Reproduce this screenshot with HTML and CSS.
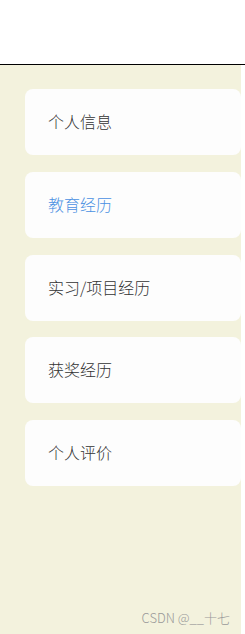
FILE: index.html
```html
<!DOCTYPE html>
<html lang="zh-CN">
<head>
  <meta charset="UTF-8">
  <title>简历</title>
  <link rel="stylesheet" href="styles.css">
</head>
<body>
  <div class="topo"></div>

  <div class="menu">
    <div class="item">个人信息</div>
    <div class="item ativo">教育经历</div>
    <div class="item">实习/项目经历</div>
    <div class="item">获奖经历</div>
    <div class="item">个人评价</div>

    <span class="marca">CSDN @__十七</span>
  </div>
</body>
</html>
```

FILE: styles.css
```css
* {
  box-sizing: border-box;
}

body {
  margin: 0;
  padding: 0;
  background-color: #fff;
  font-family: "Noto Sans CJK SC", "Liberation Sans", sans-serif;
  height: 634px;
  display: flex;
  flex-direction: column;
}

.topo {
  height: 65px;
  border-bottom: 1px solid #000;
}

.menu {
  position: relative;
  flex: 1;
  width: 241px;
  background-color: #f3f2dd;
  padding: 24px 0 0 25px;
  display: flex;
  flex-direction: column;
  gap: 16.75px;
}

.item {
  height: 66px;
  background-color: #fdfdfd;
  border-radius: 8px;
  padding: 0 0 2px 23px;
  display: flex;
  align-items: center;
  font-size: 16px;
  font-weight: 300;
  color: #333;
}

.ativo {
  color: #4a90e2;
}

.marca {
  position: absolute;
  right: 11px;
  bottom: 7px;
  font-size: 13px;
  font-weight: 300;
  color: #999;
}
```
